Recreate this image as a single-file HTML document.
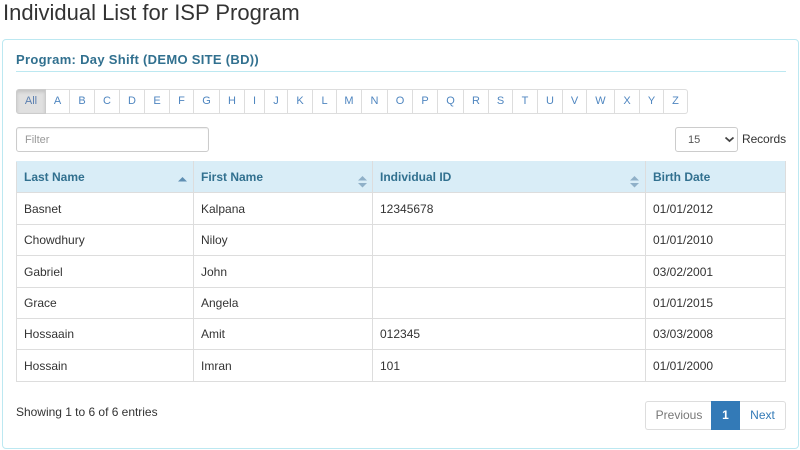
<!DOCTYPE html>
<html><head><meta charset="utf-8"><style>
html,body{margin:0;padding:0;background:#fff;width:800px;height:450px;overflow:hidden}
body{position:relative;font-family:"Liberation Sans",sans-serif;font-size:12px;color:#333}
.a{position:absolute;white-space:nowrap}
.panel{left:2px;top:39px;width:797px;height:410px;box-sizing:border-box;border:1px solid #bce8f1;border-radius:4px}
.lt{position:absolute;top:89px;height:25px;box-sizing:border-box;border:1px solid #ddd;border-left:0;text-align:center;line-height:23px;color:#4f86c0;font-size:11px;background:#fff}
table{position:absolute;left:16px;top:161px;width:769px;border-collapse:collapse;table-layout:fixed;font-size:12px}
td,th{border:1px solid #ddd;padding:0 7px;text-align:left;height:31px;box-sizing:border-box;color:#333}
tr.t td{height:32px}
th{background:#d9edf7;color:#31708f;font-weight:bold;height:31px;border-color:#d9edf7 #ddd #ddd #ddd;position:relative}
.pg{position:absolute;top:401px;height:29px;box-sizing:border-box;border:1px solid #ddd;line-height:27px;text-align:center;font-size:12px}
</style></head><body>
<div class="a" style="left:3px;top:-1px;font-size:22px;line-height:28px;color:#333">Individual List for ISP Program</div>
<div class="a panel"></div>
<div class="a" style="left:16px;top:52px;font-size:13px;line-height:16px;font-weight:bold;color:#31708f;letter-spacing:.3px">Program: Day Shift (DEMO SITE (BD))</div>
<div class="a" style="left:16px;top:71px;width:770px;height:1px;background:#bce8f1"></div>

<div class="lt" style="left:16px;width:30px;border-left:1px solid #ccc;border-color:#ccc;background:#e0e0e0;color:#5a7fb0;border-radius:3px 0 0 3px;box-shadow:inset 0 2px 3px rgba(0,0,0,.13)">All</div>
<div class="lt" style="left:46px;width:24px">A</div>
<div class="lt" style="left:70px;width:25px">B</div>
<div class="lt" style="left:95px;width:25px">C</div>
<div class="lt" style="left:120px;width:25px">D</div>
<div class="lt" style="left:145px;width:25px">E</div>
<div class="lt" style="left:170px;width:24px">F</div>
<div class="lt" style="left:194px;width:26px">G</div>
<div class="lt" style="left:220px;width:25px">H</div>
<div class="lt" style="left:245px;width:20px">I</div>
<div class="lt" style="left:265px;width:23px">J</div>
<div class="lt" style="left:288px;width:25px">K</div>
<div class="lt" style="left:313px;width:24px">L</div>
<div class="lt" style="left:337px;width:25px">M</div>
<div class="lt" style="left:362px;width:26px">N</div>
<div class="lt" style="left:388px;width:25px">O</div>
<div class="lt" style="left:413px;width:25px">P</div>
<div class="lt" style="left:438px;width:26px">Q</div>
<div class="lt" style="left:464px;width:25px">R</div>
<div class="lt" style="left:489px;width:24px">S</div>
<div class="lt" style="left:513px;width:25px">T</div>
<div class="lt" style="left:538px;width:25px">U</div>
<div class="lt" style="left:563px;width:24px">V</div>
<div class="lt" style="left:587px;width:28px">W</div>
<div class="lt" style="left:615px;width:25px">X</div>
<div class="lt" style="left:640px;width:24px">Y</div>
<div class="lt" style="left:664px;width:24px;border-radius:0 3px 3px 0">Z</div>

<div class="a" style="left:16px;top:127px;width:193px;height:25px;box-sizing:border-box;border:1px solid #ccc;border-radius:3px;padding-left:8px;line-height:24px;font-size:11px;color:#999;box-shadow:inset 0 1px 1px rgba(0,0,0,.07)">Filter</div>
<div class="a" style="left:675px;top:127px;width:63px;height:25px;box-sizing:border-box;border:1px solid #ccc;border-radius:3px;padding-left:12px;line-height:24px;font-size:11px;color:#555">15
<svg style="position:absolute;left:48px;top:8px" width="11" height="7" viewBox="0 0 11 7"><path d="M1.5 1.5 L5.5 5 L9.5 1.5" fill="none" stroke="#444" stroke-width="1.8"/></svg></div>
<div class="a" style="left:742px;top:132px;font-size:12px;line-height:14px;color:#333;letter-spacing:-.1px">Records</div>

<table>
<colgroup><col style="width:177px"><col style="width:179px"><col style="width:273px"><col style="width:140px"></colgroup>
<tr><th>Last Name<svg style="position:absolute;left:161px;top:15px" width="10" height="5"><path d="M0 4.5 L4.5 0 L9 4.5Z" fill="#5f8fb3"/></svg></th>
<th>First Name<svg style="position:absolute;left:164px;top:14px" width="10" height="12"><path d="M0 4.5 L4.5 0 L9 4.5Z" fill="#8fb0c8"/><path d="M0 7 L4.5 11.5 L9 7Z" fill="#8fb0c8"/></svg></th>
<th>Individual ID<svg style="position:absolute;left:257px;top:14px" width="10" height="12"><path d="M0 4.5 L4.5 0 L9 4.5Z" fill="#8fb0c8"/><path d="M0 7 L4.5 11.5 L9 7Z" fill="#8fb0c8"/></svg></th>
<th>Birth Date</th></tr>
<tr class="t"><td>Basnet</td><td>Kalpana</td><td>12345678</td><td>01/01/2012</td></tr>
<tr><td>Chowdhury</td><td>Niloy</td><td></td><td>01/01/2010</td></tr>
<tr class="t"><td>Gabriel</td><td>John</td><td></td><td>03/02/2001</td></tr>
<tr><td>Grace</td><td>Angela</td><td></td><td>01/01/2015</td></tr>
<tr><td>Hossaain</td><td>Amit</td><td>012345</td><td>03/03/2008</td></tr>
<tr class="t"><td>Hossain</td><td>Imran</td><td>101</td><td>01/01/2000</td></tr>
</table>

<div class="a" style="left:16px;top:405px;font-size:12px;line-height:14px;color:#333;letter-spacing:-.02px">Showing 1 to 6 of 6 entries</div>
<div class="pg" style="left:645px;width:67px;color:#777;border-radius:3px 0 0 3px;border-right:0">Previous</div>
<div class="pg" style="left:711px;width:29px;background:#337ab7;border-color:#337ab7;color:#fff;font-weight:bold">1</div>
<div class="pg" style="left:740px;width:46px;color:#337ab7;border-left:0;border-radius:0 3px 3px 0">Next</div>
</body></html>
